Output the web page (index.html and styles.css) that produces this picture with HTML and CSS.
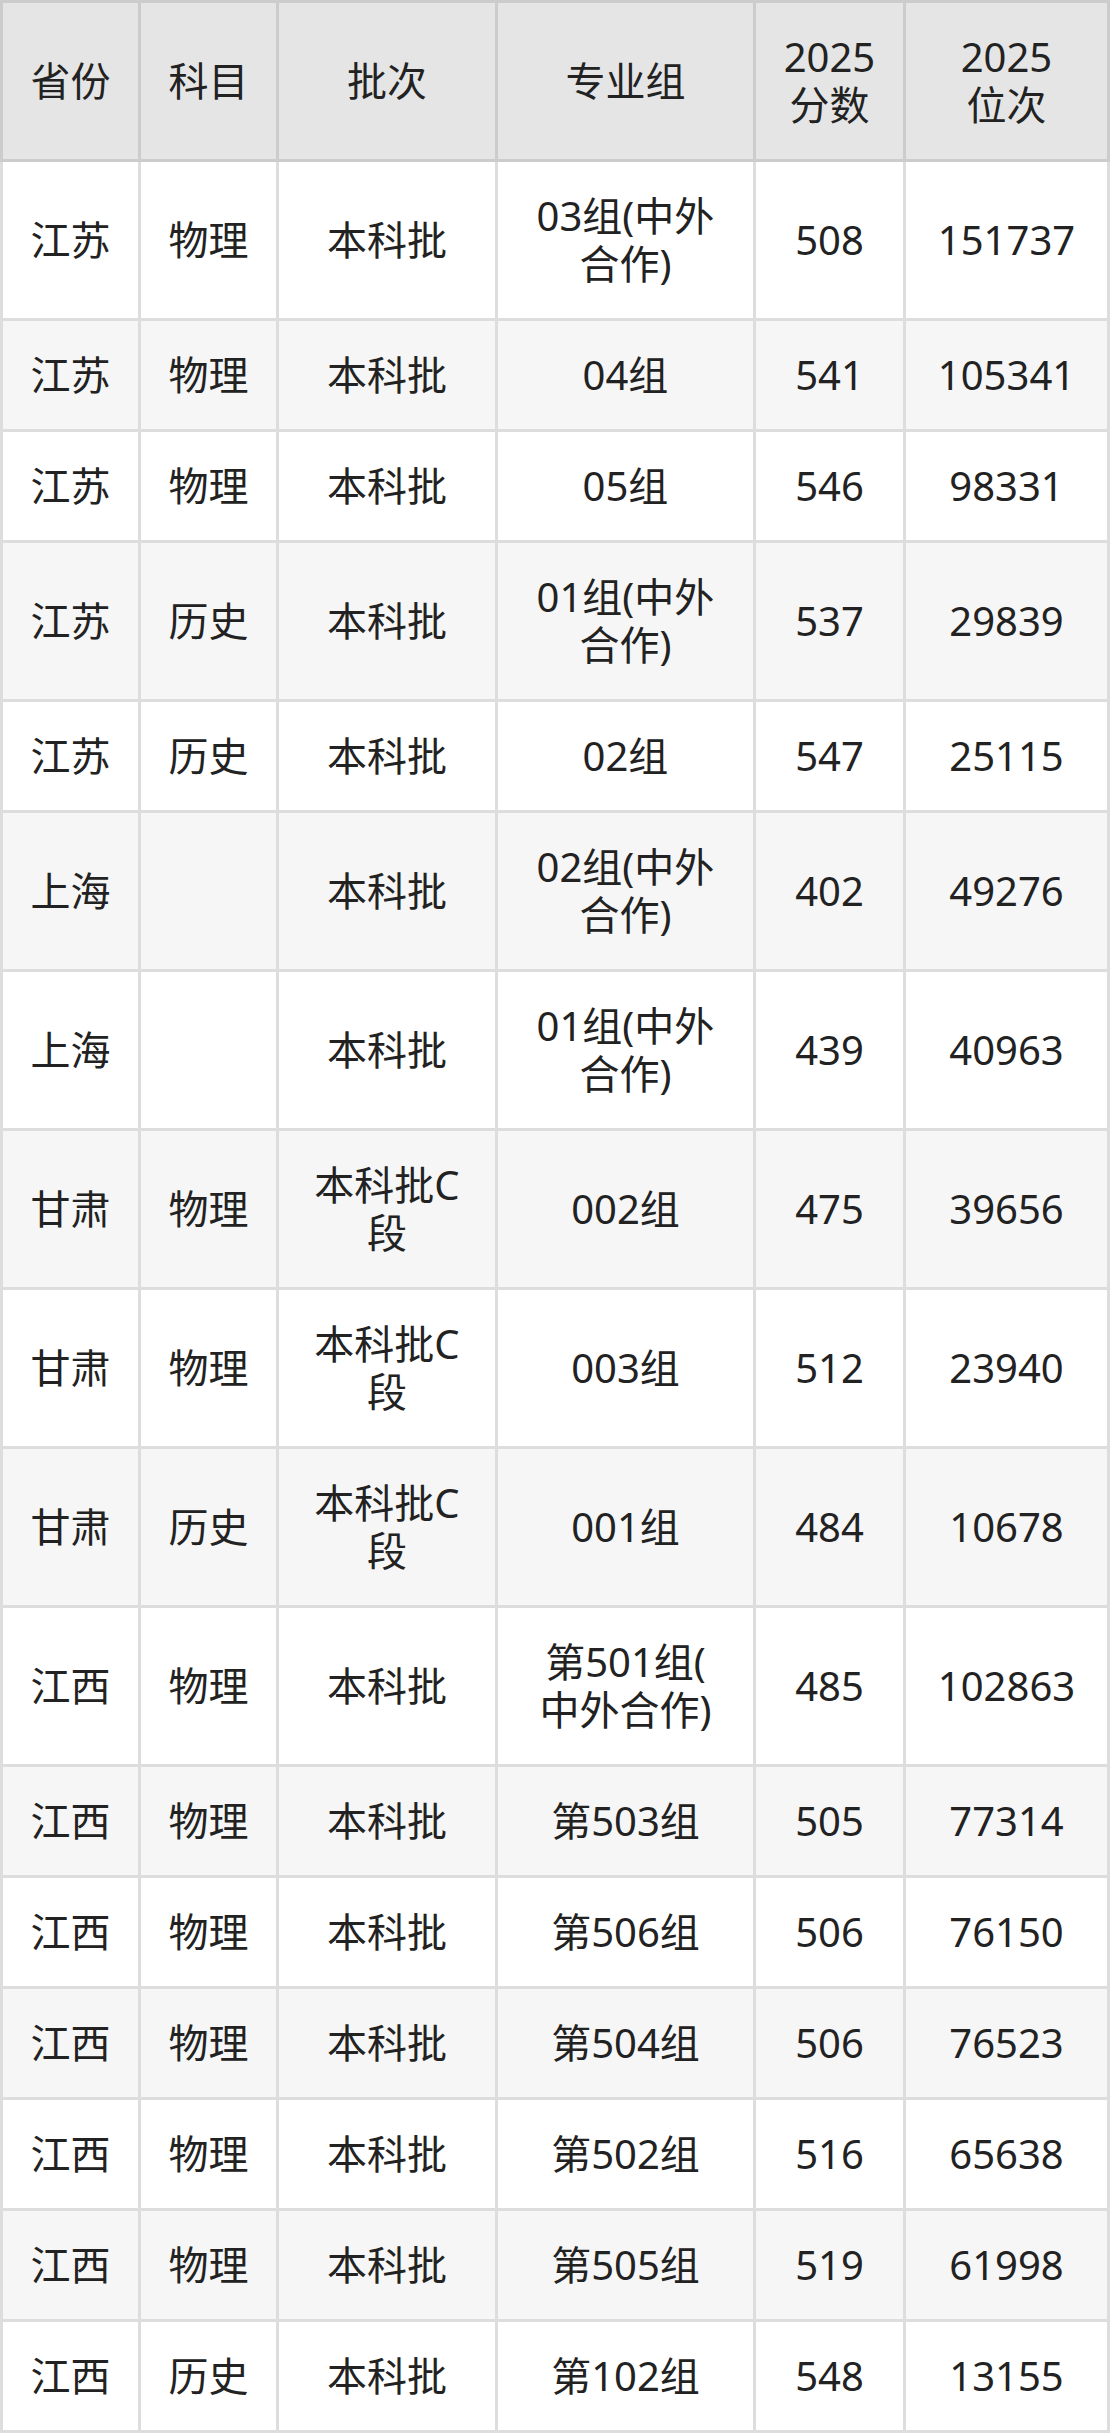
FILE: index.html
```html
<!DOCTYPE html>
<html lang="zh-CN">
<head>
<meta charset="utf-8">
<title>分数线</title>
<link rel="stylesheet" href="styles.css">
</head>
<body>
<table class="score-table">
  <thead>
    <tr>
      <th class="c1">省份</th>
      <th class="c2">科目</th>
      <th class="c3">批次</th>
      <th class="c4">专业组</th>
      <th class="c5">2025<br>分数</th>
      <th class="c6">2025<br>位次</th>
    </tr>
  </thead>
  <tbody>
    <tr><td>江苏</td><td>物理</td><td>本科批</td><td class="grp">03组(中外合作)</td><td>508</td><td>151737</td></tr>
    <tr><td>江苏</td><td>物理</td><td>本科批</td><td class="grp">04组</td><td>541</td><td>105341</td></tr>
    <tr><td>江苏</td><td>物理</td><td>本科批</td><td class="grp">05组</td><td>546</td><td>98331</td></tr>
    <tr><td>江苏</td><td>历史</td><td>本科批</td><td class="grp">01组(中外合作)</td><td>537</td><td>29839</td></tr>
    <tr><td>江苏</td><td>历史</td><td>本科批</td><td class="grp">02组</td><td>547</td><td>25115</td></tr>
    <tr><td>上海</td><td></td><td>本科批</td><td class="grp">02组(中外合作)</td><td>402</td><td>49276</td></tr>
    <tr><td>上海</td><td></td><td>本科批</td><td class="grp">01组(中外合作)</td><td>439</td><td>40963</td></tr>
    <tr><td>甘肃</td><td>物理</td><td class="batch">本科批C段</td><td class="grp">002组</td><td>475</td><td>39656</td></tr>
    <tr><td>甘肃</td><td>物理</td><td class="batch">本科批C段</td><td class="grp">003组</td><td>512</td><td>23940</td></tr>
    <tr><td>甘肃</td><td>历史</td><td class="batch">本科批C段</td><td class="grp">001组</td><td>484</td><td>10678</td></tr>
    <tr><td>江西</td><td>物理</td><td>本科批</td><td class="grp">第501组(中外合作)</td><td>485</td><td>102863</td></tr>
    <tr><td>江西</td><td>物理</td><td>本科批</td><td class="grp">第503组</td><td>505</td><td>77314</td></tr>
    <tr><td>江西</td><td>物理</td><td>本科批</td><td class="grp">第506组</td><td>506</td><td>76150</td></tr>
    <tr><td>江西</td><td>物理</td><td>本科批</td><td class="grp">第504组</td><td>506</td><td>76523</td></tr>
    <tr><td>江西</td><td>物理</td><td>本科批</td><td class="grp">第502组</td><td>516</td><td>65638</td></tr>
    <tr><td>江西</td><td>物理</td><td>本科批</td><td class="grp">第505组</td><td>519</td><td>61998</td></tr>
    <tr><td>江西</td><td>历史</td><td>本科批</td><td class="grp">第102组</td><td>548</td><td>13155</td></tr>
  </tbody>
</table>
</body>
</html>
```
FILE: styles.css
```css
html, body {
  margin: 0;
  padding: 0;
  background: #ffffff;
}

body {
  font-family: "Noto Sans", "Noto Sans CJK SC", sans-serif;
  color: #222222;
}

.score-table {
  width: 1110px;
  table-layout: fixed;
  border-collapse: separate;
  border-spacing: 0;
  font-size: 40px;
  line-height: 48px;
}

.score-table th,
.score-table td {
  box-sizing: border-box;
  padding: 30px 20px;
  text-align: center;
  vertical-align: middle;
  font-weight: 400;
  line-break: anywhere;
}

.score-table th {
  background: #e5e5e5;
  border-top: 3px solid #cccccc;
  border-right: 3px solid #cccccc;
  border-bottom: 3px solid #cccccc;
}

.score-table th:first-child {
  border-left: 3px solid #cccccc;
}

.score-table td {
  border-right: 3px solid #dddddd;
  border-bottom: 3px solid #dddddd;
}

.score-table td:first-child {
  border-left: 3px solid #dddddd;
}

.score-table tbody tr:nth-child(even) td {
  background: #f6f6f6;
}

.score-table .c1 { width: 141px; }
.score-table .c2 { width: 138px; }
.score-table .c3 { width: 219px; }
.score-table .c4 { width: 258px; }
.score-table .c5 { width: 150px; }
.score-table .c6 { width: 204px; }

.score-table .grp {
  padding-left: 30px;
  padding-right: 30px;
}
```
